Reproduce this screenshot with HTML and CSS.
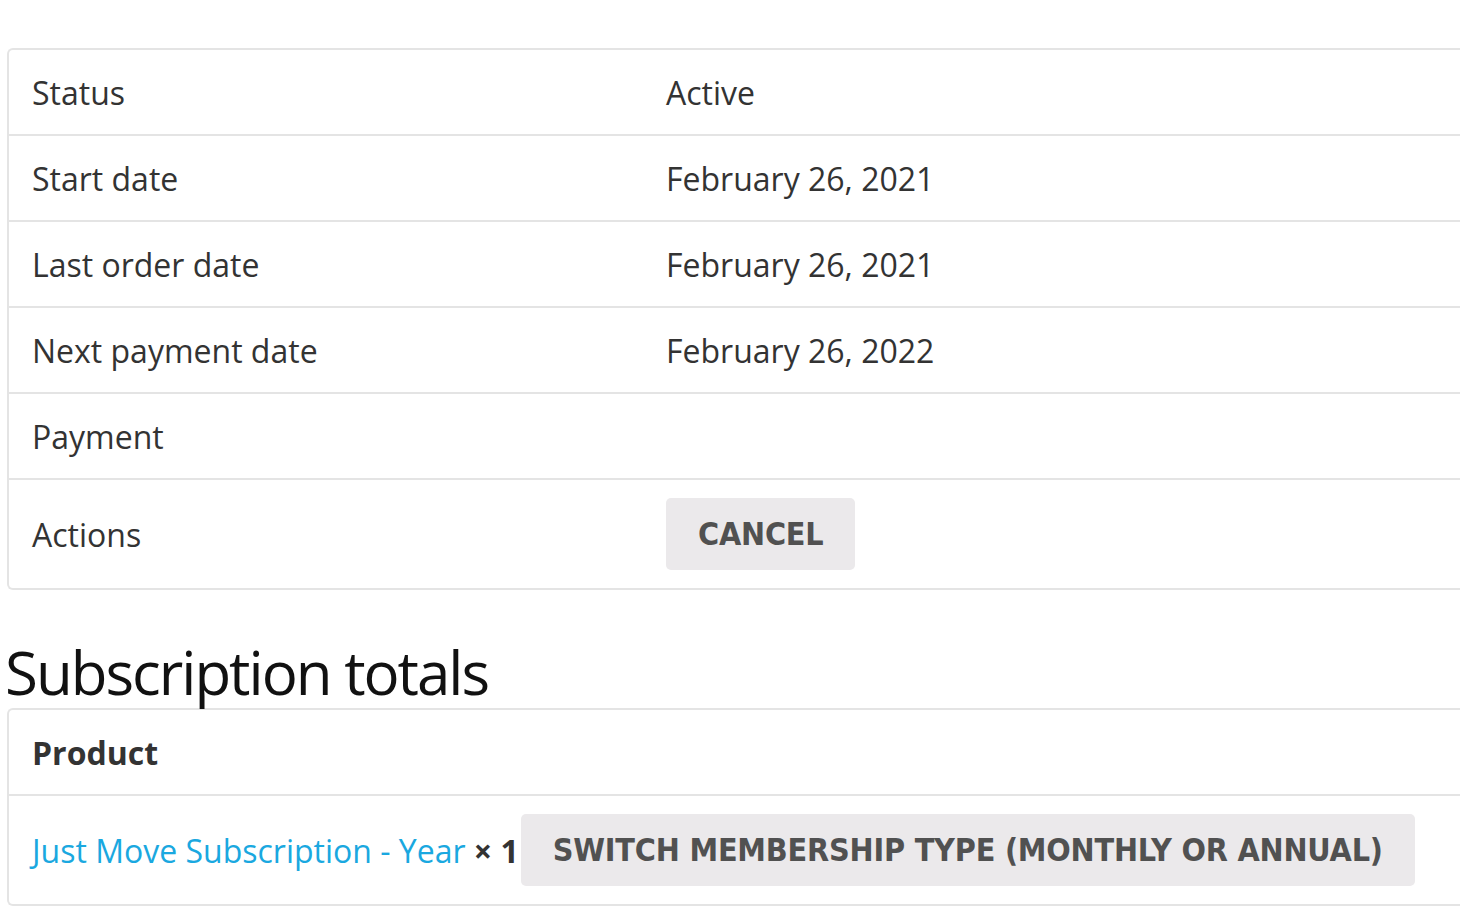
FILE: index.html
```html
<!DOCTYPE html>
<html lang="en">
<head>
  <meta charset="UTF-8">
  <meta name="viewport" content="width=device-width, initial-scale=1.0">
  <title>Subscription</title>
  <link rel="stylesheet" href="styles.css">
</head>
<body>
  <div class="page">
    <!-- Subscription details -->
    <table class="shop-table details">
      <tr>
        <td class="label">Status</td>
        <td>Active</td>
      </tr>
      <tr>
        <td class="label">Start date</td>
        <td>February 26, 2021</td>
      </tr>
      <tr>
        <td class="label">Last order date</td>
        <td>February 26, 2021</td>
      </tr>
      <tr>
        <td class="label">Next payment date</td>
        <td>February 26, 2022</td>
      </tr>
      <tr>
        <td class="label">Payment</td>
        <td></td>
      </tr>
      <tr class="actions-row">
        <td class="label">Actions</td>
        <td><a href="#" class="button">Cancel</a></td>
      </tr>
    </table>

    <h2 class="section-title">Subscription totals</h2>

    <!-- Totals -->
    <table class="shop-table totals">
      <tr>
        <th>Product</th>
      </tr>
      <tr class="product-row">
        <td>
          <a href="#" class="product-link">Just Move Subscription - Year</a>
          <strong class="qty">&times;&nbsp;1</strong><a href="#" class="button">Switch membership type (monthly or annual)</a>
        </td>
      </tr>
    </table>
  </div>
</body>
</html>
```

FILE: styles.css
```css
/* Basic Reset */
* {
  margin: 0;
  padding: 0;
  box-sizing: border-box;
}

body {
  font-family: "Open Sans", Lato, sans-serif;
  background-color: #fff;
  color: #333;
  overflow: hidden;
}

.page {
  padding: 48px 0 0 7px;
  width: 1600px;
}

/* Tables */
.shop-table {
  width: 1560px;
  border-collapse: separate;
  border-spacing: 0;
  border: 2px solid #e4e4e4;
  border-right: none;
  border-radius: 6px 0 0 6px;
  font-size: 32px;
}

.shop-table td,
.shop-table th {
  height: 86px;
  padding: 0 23px;
  text-align: left;
  vertical-align: middle;
  border-top: 2px solid #e4e4e4;
}

.shop-table tr:first-child td,
.shop-table tr:first-child th {
  border-top: none;
  height: 84px;
}

.details .label {
  width: 634px;
}

.actions-row td {
  height: 110px;
}

.shop-table th {
  font-weight: bold;
}

/* Buttons */
.button {
  display: inline-block;
  background-color: #ebe9eb;
  color: #515151;
  font-family: "DejaVu Sans Condensed", sans-serif;
  font-weight: bold;
  font-size: 32px;
  letter-spacing: -0.2px;
  text-transform: uppercase;
  text-decoration: none;
  line-height: 72px;
  padding: 0 32px;
  border-radius: 5px;
  vertical-align: middle;
}

/* Heading */
.section-title {
  font-size: 60px;
  font-weight: normal;
  color: #111;
  letter-spacing: -2px;
  line-height: 1;
  margin: 52px 0 6px -2px;
}

/* Totals */
.product-row td {
  height: 110px;
  white-space: nowrap;
}

.product-link {
  color: #1aa8e0;
  text-decoration: none;
  vertical-align: middle;
}

.qty {
  color: #333;
  vertical-align: middle;
  margin-right: 2px;
}
```
